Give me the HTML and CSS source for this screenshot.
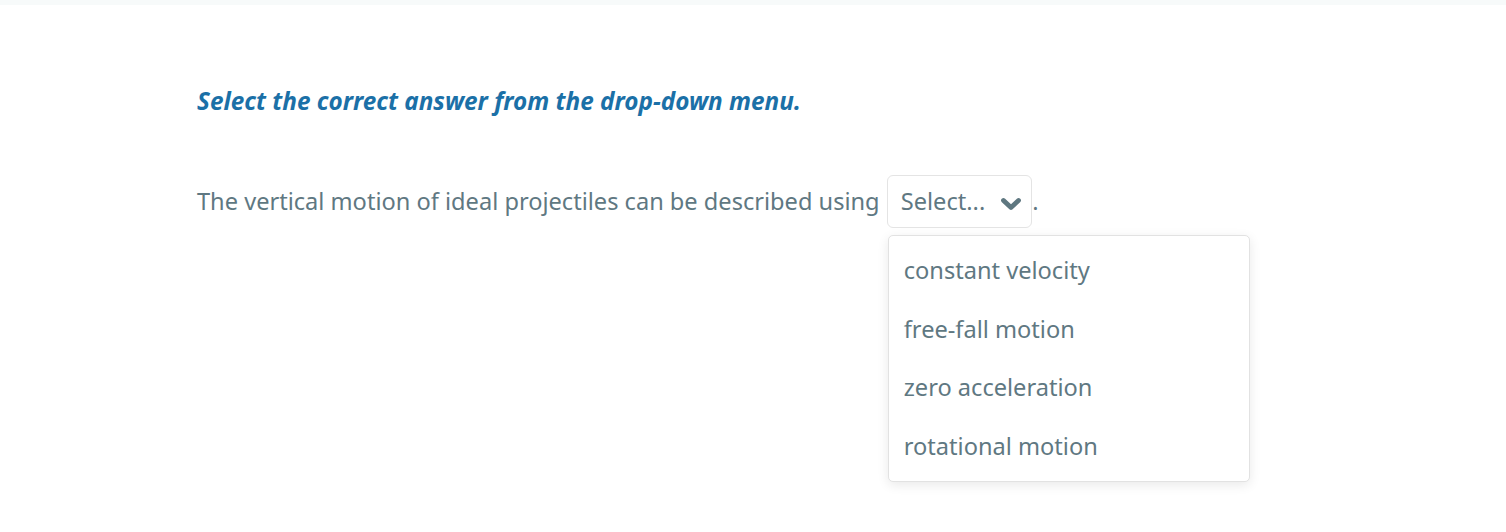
FILE: index.html
```html
<!DOCTYPE html>
<html lang="en">
<head>
    <meta charset="UTF-8">
    <title>Drop-down question</title>
    <link rel="stylesheet" href="styles.css">
</head>
<body>
    <div class="top-bar"></div>

    <div class="question">
        <h2 class="prompt">Select the correct answer from the drop-down menu.</h2>

        <div class="stem">
            The vertical motion of ideal projectiles can be described using
            <span class="dropdown">
                <span class="select-box">Select...<svg class="chevron" width="22" height="14" viewBox="0 0 22 14">
                        <path d="M3.5 3.5 L11 10.5 L18.5 3.5" fill="none" stroke="#5e7780" stroke-width="4.8" stroke-linecap="round" stroke-linejoin="round"/>
                    </svg></span>
                <div class="menu">
                    <div class="option">constant velocity</div>
                    <div class="option">free-fall motion</div>
                    <div class="option">zero acceleration</div>
                    <div class="option">rotational motion</div>
                </div>
            </span>.
        </div>
    </div>
</body>
</html>
```

FILE: styles.css
```css
/* General reset */
* {
    margin: 0;
    padding: 0;
    box-sizing: border-box;
}

html, body {
    min-height: 100%;
}

body {
    min-height: 100vh;
    font-family: 'Noto Sans', 'Open Sans', sans-serif;
    background-color: #ffffff;
    color: #5f7882;
}

.top-bar {
    height: 5px;
    background-color: #f7fafa;
}

.question {
    min-height: 520px;
    padding: 81px 0 0 197px;
}

.prompt {
    font-size: 24.3px;
    line-height: 30px;
    font-weight: bold;
    font-style: italic;
    color: #1b70a7;
    margin-bottom: 58px;
}

.stem {
    font-size: 23.6px;
    line-height: 54px;
}

.dropdown {
    position: relative;
    display: inline-block;
    margin-left: 1px;
}

.select-box {
    display: block;
    line-height: 32px;
    padding: 9px 9px 10px 13px;
    border: 1px solid #e4e4e4;
    border-radius: 6px;
    white-space: nowrap;
}

.chevron {
    vertical-align: -1px;
    margin-left: 15px;
}

/* open list under the select box */
.menu {
    position: absolute;
    top: 60px;
    left: 1px;
    width: 362px;
    background-color: #fff;
    border: 1px solid #e2e2e2;
    border-radius: 5px;
    box-shadow: 0 3px 12px rgba(0, 0, 0, 0.09);
    padding: 5px 0 6px;
    z-index: 5;
}

.option {
    padding: 0 15px;
    line-height: 58.5px;
    white-space: nowrap;
}
```
